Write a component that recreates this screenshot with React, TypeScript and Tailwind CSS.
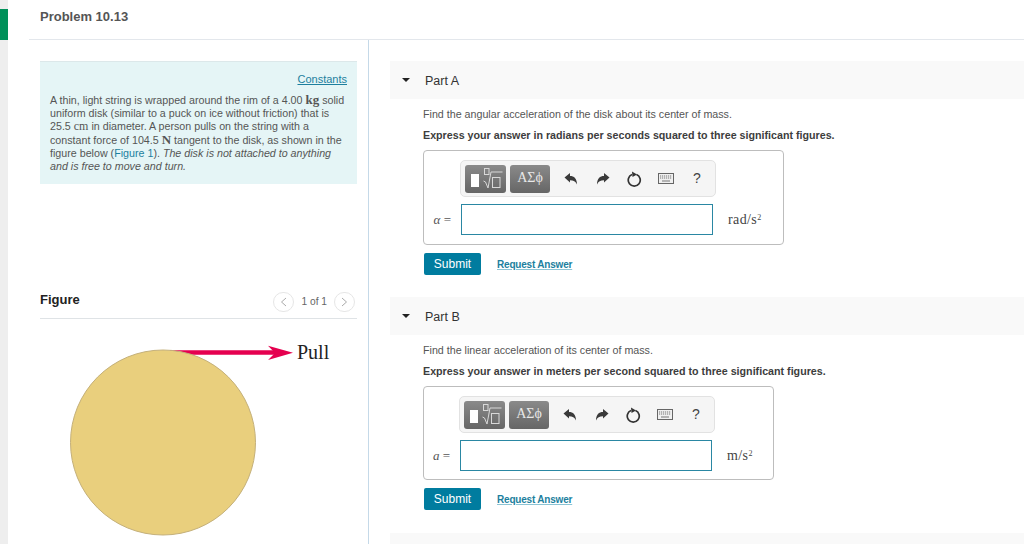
const sans = "font-['Liberation_Sans',Arial,sans-serif]";
const serif = "font-['Liberation_Serif','Times_New_Roman',serif]";

const MathButtons = () => (
  <div className="flex gap-[4px]">
    <div className="relative w-[41px] h-[28px] rounded-[3px] bg-gradient-to-b from-[#8a8a8a] to-[#666666]">
      <span className="absolute left-[6px] top-[9px] w-[8px] h-[13px] bg-white" />
      <svg className="absolute left-[18px] top-[3px]" width="20" height="22" viewBox="0 0 20 22" fill="none" stroke="#d8d8d8">
        <rect x="1.5" y="0.5" width="4.5" height="6" />
        <path d="M0.5 13l2 1 2.5 6 3-16h11.5" />
        <rect x="9.5" y="9.5" width="7.5" height="10" />
      </svg>
    </div>
    <div className={`w-[40px] h-[28px] rounded-[3px] bg-gradient-to-b from-[#8a8a8a] to-[#666666] text-[#e8e8e8] text-[14px] leading-[26px] text-center ${serif}`}>
      ΑΣϕ
    </div>
  </div>
);

const ToolIcons = () => (
  <div className="flex items-center text-[#333333]">
    <svg className="ml-[14px]" width="14" height="14" viewBox="0 0 14 14" fill="#3a3a3a">
      <path d="M0.5 5.5L6 1v3c4 0 7 2.500 7 8.500-1.300-3-3.500-4.300-7-4.300V10.500z" />
    </svg>
    <svg className="ml-[18px]" width="14" height="14" viewBox="0 0 14 14" fill="#3a3a3a">
      <path d="M13.500 5.500L8 1v3c-4 0-7 2.500-7 8.500 1.300-3 3.500-4.300 7-4.300V10.500z" />
    </svg>
    <svg className="ml-[17px]" width="15" height="16" viewBox="0 0 15 16" fill="none">
      <path d="M9.500 3.500a6 6 0 1 1-4.500 0" stroke="#333333" strokeWidth="1.700" />
      <path d="M5 0.500l5 3-4.500 2.500z" fill="#333333" />
    </svg>
    <svg className="ml-[16px]" width="16" height="11" viewBox="0 0 16 11" fill="none">
      <rect x="0.500" y="0.500" width="15" height="10" fill="#f0f0f0" stroke="#666666" />
      <path d="M2 3h12M2 5h12" stroke="#777777" strokeDasharray="1.200 0.800" />
      <path d="M4 8h8" stroke="#777777" />
    </svg>
    <span className={`ml-[19px] text-[14px] text-[#444444] ${sans}`}>?</span>
  </div>
);

const AnswerBox = ({ symbol, unit, exp, boxSize, indent }: { symbol: string; unit: string; exp: string; boxSize: string; indent: string }) => (
  <div className={`${boxSize} border border-[#bdbdbd] rounded-[4px] bg-white`}>
    <div className={`${indent} -translate-x-[1px] mt-[9px] w-[256px] h-[37px] flex items-center pl-[4px] rounded-[5px] border border-[#e2e2e2] bg-[#f5f5f5]`}>
      <MathButtons />
      <ToolIcons />
    </div>
    <div className={`${indent} relative mt-[7px] flex items-center`}>
      <span className={`absolute right-full mr-[10px] text-[13px] whitespace-nowrap text-[#555555] ${serif}`}>
        <i>{symbol}</i> =
      </span>
      <div className="w-[252px] h-[31px] border border-[#2a87a3] bg-white" />
      <span className={`ml-[15px] text-[14px] tracking-[0.4px] text-[#444444] ${serif}`}>
        {unit}
        <sup className="text-[8px]">{exp}</sup>
      </span>
    </div>
  </div>
);

const Part = ({ name, find, express, mt, symbol, unit, boxSize, indent }: { name: string; find: string; express: string; mt: string; symbol: string; unit: string; boxSize: string; indent: string }) => (
  <section className={mt}>
    <div className="h-[38px] bg-[#f9f9f9] flex items-center">
      <span className="ml-[12px] w-0 h-0 border-x-[4px] border-x-transparent border-t-[4px] border-t-[#222222]" />
      <h2 className="ml-[15px] pt-[2px] text-[12.500px] text-[#333333]">{name}</h2>
    </div>
    <div className="pl-[33px]">
      <p className="mt-[9px] text-[10.700px] leading-[13px] text-[#555555]">{find}</p>
      <p className="mt-[8px] mb-[8px] text-[10.700px] leading-[13px] font-bold text-[#3d3d3d]">{express}</p>
      <AnswerBox symbol={symbol} unit={unit} exp="2" boxSize={boxSize} indent={indent} />
      <div className="mt-[8px] flex items-center">
        <button className="ml-[1px] w-[57px] h-[22px] rounded-[2px] bg-[#007c9f] text-white text-[12px]">Submit</button>
        <a className="ml-[16px] text-[10px] tracking-[-0.2px] font-bold text-[#1d7f9e] underline decoration-[#8cc4d4]">Request Answer</a>
      </div>
    </div>
  </section>
);

export default function App() {
  return (
    <div className={`w-[1024px] h-[544px] overflow-hidden flex bg-white ${sans}`}>
      {/* Side rail */}
      <aside className="w-[8px] shrink-0 bg-[#eeeeee] pt-[9px]">
        <div className="h-[31px] bg-[#00915a]" />
      </aside>

      <div className="flex-1 min-w-0 pl-[21px]">
        <header className="h-[40px] border-b border-[#e3e7ec]">
          <h1 className="pl-[11px] pt-[9px] text-[13px] leading-[16px] font-bold text-[#555555]">Problem 10.13</h1>
        </header>

        <div className="flex h-[504px]">
          {/* Left column */}
          <div className="w-[340px] shrink-0 border-r border-[#c5d9e8] pl-[11px] pr-[11px] pt-[21px]">
            <div className="h-[123px] w-[317px] bg-[#e5f5f6] border-t border-[#dce8ea] px-[10px] pt-[10px]">
              <div className="text-right text-[11px] leading-[14px] text-[#1d7f9e] underline">Constants</div>
              <p className="mt-[8px] text-[10.700px] leading-[13.200px] text-[#555555]">
                A thin, light string is wrapped around the rim of a 4.00 <b className={`${serif} text-[13px] leading-[0]`}>kg</b> solid uniform disk (similar to a puck on ice without friction) that is 25.5 <span className={`${serif} text-[12px] leading-[0]`}>cm</span> in diameter. A person pulls on the string with a constant force of 104.5 <b className={`${serif} text-[13px] leading-[0]`}>N</b> tangent to the disk, as shown in the figure below (<span className="text-[#1d7f9e]">Figure 1</span>). <i>The disk is not attached to anything and is free to move and turn.</i>
              </p>
            </div>

            <div className="mt-[105px] h-[30px] border-b border-[#dfe3e6] flex items-center justify-between pb-[7px]">
              <h2 className="text-[13px] font-bold text-[#222222]">Figure</h2>
              <div className="mt-[4px] mr-[2px] flex items-center text-[10.200px] text-[#666666]">
                <span className="w-[21px] h-[20px] rounded-full border border-[#e6e6e6] flex items-center justify-center">
                  <svg width="7" height="10" viewBox="0 0 7 10" fill="none" stroke="#aaaaaa"><path d="M6 1L1.500 5 6 9" /></svg>
                </span>
                <span className="ml-[8px] mr-[7px]">1 of 1</span>
                <span className="w-[21px] h-[20px] rounded-full border border-[#e6e6e6] flex items-center justify-center">
                  <svg width="7" height="10" viewBox="0 0 7 10" fill="none" stroke="#aaaaaa"><path d="M1 1l4.500 4L1 9" /></svg>
                </span>
              </div>
            </div>

            <div className="relative mt-[20px] h-[200px]">
              <svg width="300" height="200" viewBox="0 0 300 200" className="ml-[30px]">
                <path d="M100 13.500H205" stroke="#e5004f" strokeWidth="4.500" />
                <path d="M198 6.700L223 13.700 198 21 205 14z" fill="#e5004f" />
                <circle cx="93" cy="103.500" r="92.500" fill="#e9cf7d" stroke="#c4b07a" />
              </svg>
              <span className={`absolute left-[257px] top-[1px] text-[20px] leading-[24px] text-[#222222] ${serif}`}>Pull</span>
            </div>
          </div>

          {/* Right column */}
          <main className="flex-1 min-w-0 pl-[21px] pt-[21px]">
            <Part
              name="Part A"
              find="Find the angular acceleration of the disk about its center of mass."
              express="Express your answer in radians per seconds squared to three significant figures."
              mt=""
              symbol="α"
              unit="rad/s"
              boxSize="w-[361px] h-[95px]"
              indent="ml-[37px]"
            />
            <Part
              name="Part B"
              find="Find the linear acceleration of its center of mass."
              express="Express your answer in meters per second squared to three significant figures."
              mt="mt-[22px]"
              symbol="a"
              unit="m/s"
              boxSize="w-[351px] h-[94px]"
              indent="ml-[36px]"
            />
            <div className="mt-[23px] h-[20px] bg-[#f9f9f9]" />
          </main>
        </div>
      </div>
    </div>
  );
}
